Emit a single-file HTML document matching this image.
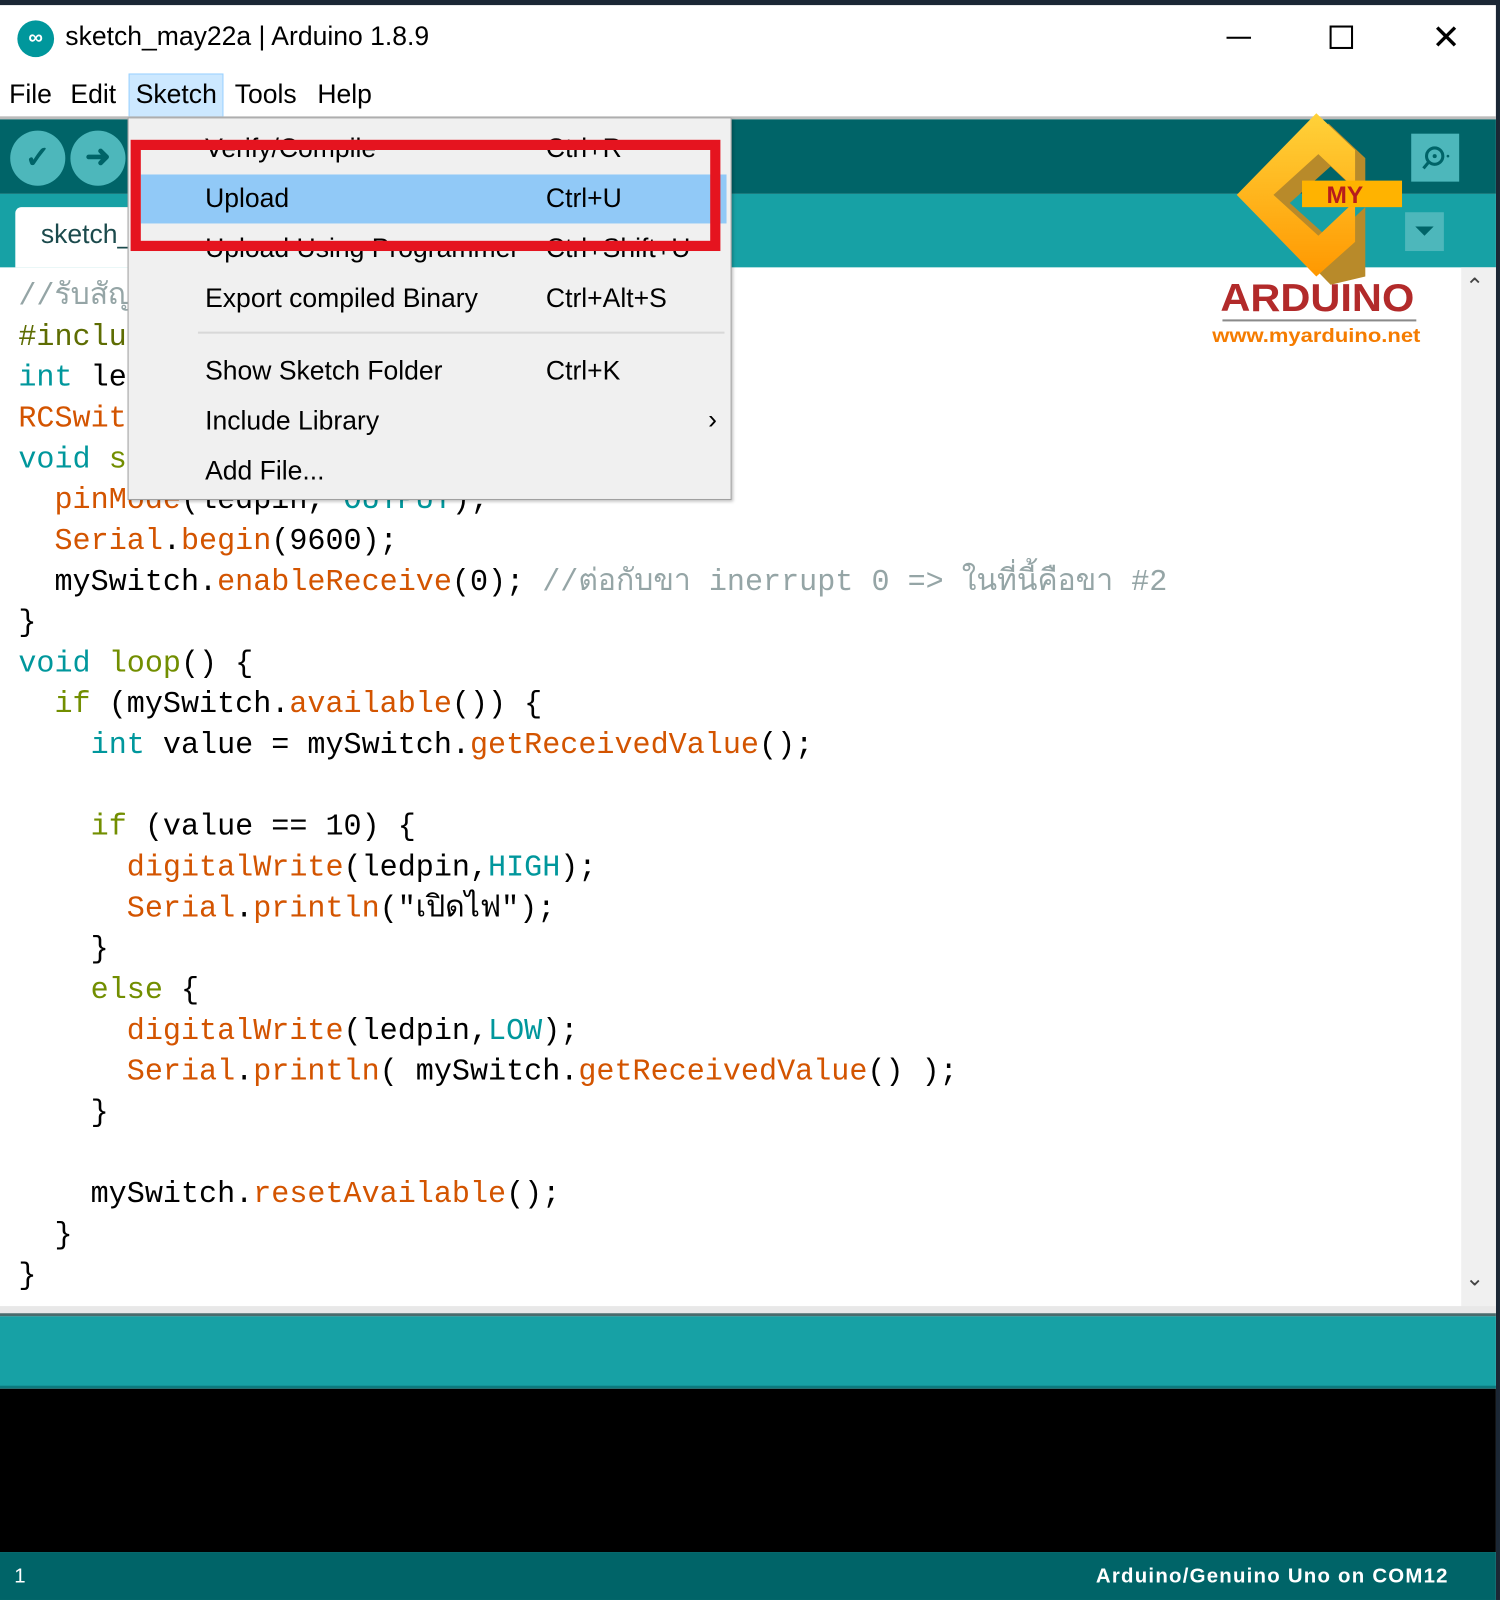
<!DOCTYPE html>
<html><head><meta charset="utf-8"><style>
*{margin:0;padding:0;box-sizing:border-box}
html,body{width:1500px;height:1600px;overflow:hidden;background:#fff}
#w{position:absolute;left:0;top:0;width:1470px;height:1568px;transform:scale(1.0204);transform-origin:0 0;font-family:"Liberation Sans",sans-serif}
.a{position:absolute}
.code{position:absolute;left:18px;top:270px;font-family:"Liberation Mono","Noto Sans CJK SC",monospace;font-size:29.5px;line-height:40px;white-space:pre;color:#000}
.k{color:#00979c}.o{color:#728e00}.f{color:#d35400}.c{color:#95a5a6}.p{color:#5e6d03}
.mi{position:absolute;left:75px;font-size:26px;color:#000}
.ms{position:absolute;left:409px;font-size:26px;color:#000}
</style></head><body><div id="w">
<div class="a" style="left:0;top:0;width:1470px;height:5px;background:#1b2735"></div>
<div class="a" style="left:1466px;top:0;width:4px;height:1568px;background:#1b2735"></div>
<div class="a" style="left:17px;top:20px;width:36px;height:36px;border-radius:50%;background:#00979c;color:#fff;font-size:20px;font-weight:bold;text-align:center;line-height:34px">∞</div>
<div class="a" style="left:64px;top:20px;font-size:26px;color:#000">sketch_may22a | Arduino 1.8.9</div>
<div class="a" style="left:1202px;top:36px;width:24px;height:2px;background:#000"></div>
<div class="a" style="left:1303px;top:25px;width:23px;height:23px;border:2px solid #000"></div>
<div class="a" style="left:1403px;top:22px;font-size:34px;color:#000;line-height:30px">✕</div>
<div class="a" style="left:126px;top:72px;width:93px;height:43px;background:#cce8ff;border:1px solid #99d1ff"></div>
<div class="a" style="left:9px;top:77px;font-size:26px">File</div>
<div class="a" style="left:69px;top:77px;font-size:26px">Edit</div>
<div class="a" style="left:133px;top:77px;font-size:26px">Sketch</div>
<div class="a" style="left:230px;top:77px;font-size:26px">Tools</div>
<div class="a" style="left:311px;top:77px;font-size:26px">Help</div>
<div class="a" style="left:0;top:114px;width:1466px;height:3px;background:#bbb"></div>
<div class="a" style="left:0;top:117px;width:1466px;height:73px;background:#006468"></div>
<div class="a" style="left:0;top:190px;width:1466px;height:72px;background:#17a1a5"></div>
<div class="a" style="left:10px;top:128px;width:54px;height:54px;border-radius:50%;background:#4db7bb;color:#006468;font-size:30px;text-align:center;line-height:54px;font-weight:bold">✓</div>
<div class="a" style="left:69px;top:128px;width:54px;height:54px;border-radius:50%;background:#4db7bb;color:#006468;font-size:30px;text-align:center;line-height:52px;font-weight:bold">➜</div>
<div class="a" style="left:1383px;top:131px;width:47px;height:47px;background:#4db7bb"></div>
<svg class="a" style="left:1383px;top:131px" width="47" height="47"><circle cx="23" cy="22" r="8" fill="none" stroke="#006468" stroke-width="3"/><circle cx="23" cy="22" r="2" fill="#006468"/><line x1="17" y1="28" x2="12" y2="34" stroke="#006468" stroke-width="3"/><circle cx="36" cy="22" r="1.3" fill="#006468"/></svg>
<div class="a" style="left:1377px;top:208px;width:38px;height:38px;background:#4db7bb"></div>
<div class="a" style="left:1387px;top:222px;width:0;height:0;border-left:9px solid transparent;border-right:9px solid transparent;border-top:9px solid #006468"></div>
<div class="a" style="left:15px;top:203px;width:120px;height:59px;background:#fff;border-radius:6px 6px 0 0"></div>
<div class="a" style="left:40px;top:214px;font-size:26px;color:#1b4a4c">sketch_</div>
<div class="a" style="left:1432px;top:262px;width:34px;height:1020px;background:#f0f0f0"></div>
<div class="a" style="left:1436px;top:268px;font-size:22px;color:#444">⌃</div>
<div class="a" style="left:1436px;top:1240px;font-size:22px;color:#444">⌄</div>
<div class="code"><span class="c">//รับสัญญาณ RF</span>
<span class="p">#include</span> &lt;RCSwitch.h&gt;
<span class="k">int</span> ledpin = 13;
<span class="f">RCSwitch</span> mySwitch = RCSwitch();
<span class="k">void</span> <span class="o">setup</span>() {
  <span class="f">pinMode</span>(ledpin, <span class="k">OUTPUT</span>);
  <span class="f">Serial</span>.<span class="f">begin</span>(9600);
  mySwitch.<span class="f">enableReceive</span>(0); <span class="c">//ต่อกับขา inerrupt 0 =&gt; ในที่นี้คือขา #2</span>
}
<span class="k">void</span> <span class="o">loop</span>() {
  <span class="o">if</span> (mySwitch.<span class="f">available</span>()) {
    <span class="k">int</span> value = mySwitch.<span class="f">getReceivedValue</span>();

    <span class="o">if</span> (value == 10) {
      <span class="f">digitalWrite</span>(ledpin,<span class="k">HIGH</span>);
      <span class="f">Serial</span>.<span class="f">println</span>("เปิดไฟ");
    }
    <span class="o">else</span> {
      <span class="f">digitalWrite</span>(ledpin,<span class="k">LOW</span>);
      <span class="f">Serial</span>.<span class="f">println</span>( mySwitch.<span class="f">getReceivedValue</span>() );
    }

    mySwitch.<span class="f">resetAvailable</span>();
  }
}</div>
<div class="a" style="left:0;top:1280px;width:1466px;height:10px;background:#e8e8e8;border-bottom:3px solid #4a6b6d"></div>
<div class="a" style="left:0;top:1290px;width:1466px;height:70px;background:#17a1a5"></div>
<div class="a" style="left:0;top:1358px;width:1466px;height:3px;background:#0c7a7e"></div>
<div class="a" style="left:0;top:1361px;width:1466px;height:160px;background:#000"></div>
<div class="a" style="left:0;top:1521px;width:1466px;height:47px;background:#006468"></div>
<div class="a" style="left:14px;top:1534px;font-size:20px;color:#fff">1</div>
<div class="a" style="left:1074px;top:1534px;font-size:20px;color:#fff;font-weight:bold;letter-spacing:1.2px">Arduino/Genuino Uno on COM12</div>
<svg class="a" style="left:1180px;top:105px" width="220" height="250" viewBox="0 0 220 250">
<defs><linearGradient id="g" x1="0" y1="0" x2="0" y2="1"><stop offset="0" stop-color="#ffd23a"/><stop offset="1" stop-color="#ff9800"/></linearGradient></defs>
<path d="M116 10 L152 44 L152 84 L118 52 L78 88 L118 124 L152 92 L152 160 L118 168 L40 88 Z" fill="#b88a2a" transform="translate(6,6)"/>
<path d="M110 6 L148 42 L148 80 L112 46 L68 86 L112 126 L148 92 L148 132 L110 166 L32 86 Z" fill="url(#g)"/>
<rect x="96" y="72" width="98" height="26" fill="#ffb300"/>
<text x="120" y="94" font-family="Liberation Sans" font-weight="bold" font-size="24" fill="#b71c1c">MY</text>
<text x="16" y="200" font-family="Liberation Sans" font-weight="bold" font-size="38" fill="#b22a2a" textLength="190" lengthAdjust="spacingAndGlyphs">ARDUINO</text>
<rect x="18" y="208" width="190" height="2" fill="#8a8a8a"/>
<text x="8" y="230" font-family="Liberation Sans" font-weight="bold" font-size="19" fill="#f57c00" textLength="204" lengthAdjust="spacingAndGlyphs">www.myarduino.net</text>
</svg>
<div class="a" style="left:125px;top:115px;width:592px;height:375px;background:#f0f0f0;border:1px solid #a0a0a0;box-shadow:2px 2px 3px rgba(0,0,0,.25);overflow:hidden">
<div class="a" style="left:12px;top:55px;width:574px;height:48px;background:#91c9f7"></div>
<div class="mi" style="top:14px">Verify/Compile</div><div class="ms" style="top:14px">Ctrl+R</div>
<div class="mi" style="top:63px">Upload</div><div class="ms" style="top:63px">Ctrl+U</div>
<div class="mi" style="top:112px">Upload Using Programmer</div><div class="ms" style="top:112px">Ctrl+Shift+U</div>
<div class="mi" style="top:161px">Export compiled Binary</div><div class="ms" style="top:161px">Ctrl+Alt+S</div>
<div class="a" style="left:68px;top:209px;width:516px;height:2px;background:#d8d8d8"></div>
<div class="mi" style="top:232px">Show Sketch Folder</div><div class="ms" style="top:232px">Ctrl+K</div>
<div class="mi" style="top:281px">Include Library</div><div class="a" style="left:568px;top:280px;font-size:26px">›</div>
<div class="mi" style="top:330px">Add File...</div>
</div>
<div class="a" style="left:128px;top:137px;width:578px;height:109px;border:10px solid #e5141f"></div>
</div></body></html>
